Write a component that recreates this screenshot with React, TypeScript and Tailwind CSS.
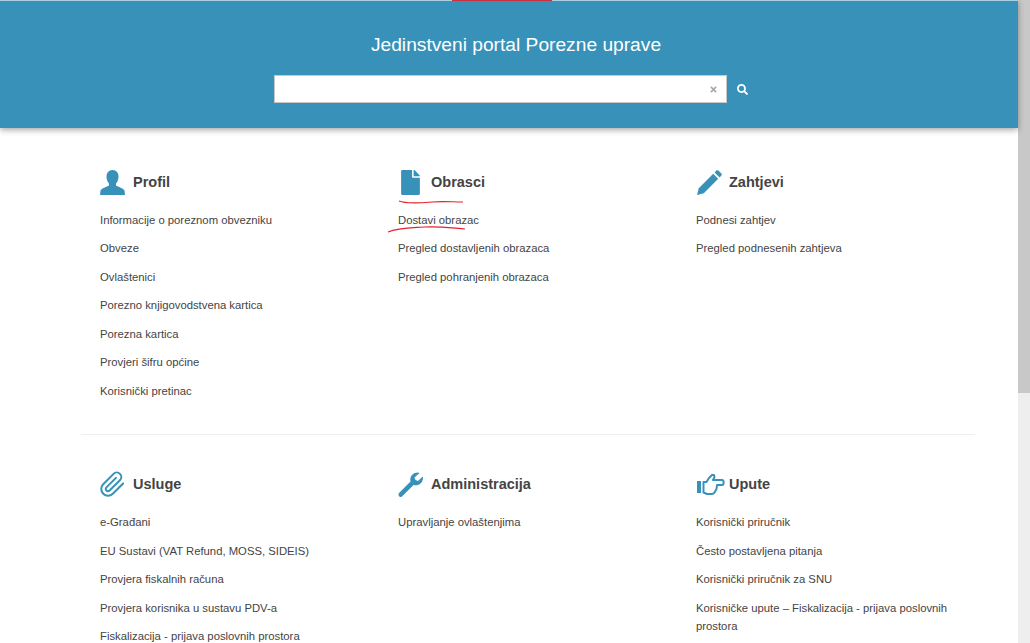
import { FaFile, FaSearch, FaTimes } from "react-icons/fa";
import { FiPaperclip } from "react-icons/fi";
import type { ReactNode } from "react";

type Section = {
  title: string;
  icon: ReactNode;
  links: string[];
};

function UserIcon() {
  return (
    <svg width="25" height="25" viewBox="0 0 25 25" fill="currentColor">
      <path d="M12.5 0C8.5 0 6.5 3 6.5 6.5C6.5 9.5 7.5 12 9 13.5V15.5C7 17 1.5 18 .5 20.5L0 25H25L24.5 20.5C23.5 18 18 17 16 15.5V13.5C17.5 12 18.5 9.5 18.5 6.5C18.5 3 16.5 0 12.5 0Z" />
    </svg>
  );
}

function PencilIcon() {
  return (
    <svg width="25" height="25" viewBox="0 0 25 25" fill="currentColor" className="translate-x-px">
      <path d="M0 25L1.8 18.2L16.2 3.8L21.2 8.8L6.8 23.2Z" />
      <path d="M17.6 2.4L19.4.6C20 0 20.8 0 21.4.6L24.4 3.6C25 4.2 25 5 24.4 5.6L22.6 7.4Z" />
    </svg>
  );
}

function WrenchIcon() {
  return (
    <svg width="25" height="25" viewBox="0 0 25 25" fill="currentColor">
      <path d="M1 21L12.5 9.5C11.5 5 14.5.5 20 .5L21.5 1L16.5 5.5L17.5 8L20 9L24.7 4.5L25 6C25 11 20 14.5 15.5 13L4 24.5C3 25.5 1.5 25 1 24C.3 23 .3 22 1 21Z" />
    </svg>
  );
}

function HandIcon() {
  return (
    <svg width="29" height="25" viewBox="0 0 29 25" fill="none" stroke="currentColor" strokeWidth="2" strokeLinejoin="round" className="-mr-1">
      <rect x="1" y="9" width="4" height="12" fill="currentColor" stroke="none" />
      <path d="M7.5 10H10.5L13 6L16 3H18L18.5 5L17 8H26C28.2 8 28.2 13 26 13H21L20.5 17L18.5 20.5C18 21.5 17 22 15.5 22H11L7.5 20.5Z" />
    </svg>
  );
}

const topSections: Section[] = [
  {
    title: "Profil",
    icon: <UserIcon />,
    links: [
      "Informacije o poreznom obvezniku",
      "Obveze",
      "Ovlaštenici",
      "Porezno knjigovodstvena kartica",
      "Porezna kartica",
      "Provjeri šifru općine",
      "Korisnički pretinac",
    ],
  },
  {
    title: "Obrasci",
    icon: <FaFile className="w-[25px] h-[25px]" />,
    links: ["Dostavi obrazac", "Pregled dostavljenih obrazaca", "Pregled pohranjenih obrazaca"],
  },
  {
    title: "Zahtjevi",
    icon: <PencilIcon />,
    links: ["Podnesi zahtjev", "Pregled podnesenih zahtjeva"],
  },
];

const bottomSections: Section[] = [
  {
    title: "Usluge",
    icon: <FiPaperclip className="w-[27px] h-[27px] -mx-px" strokeWidth={1.8} />,
    links: [
      "e-Građani",
      "EU Sustavi (VAT Refund, MOSS, SIDEIS)",
      "Provjera fiskalnih računa",
      "Provjera korisnika u sustavu PDV-a",
      "Fiskalizacija - prijava poslovnih prostora",
    ],
  },
  {
    title: "Administracija",
    icon: <WrenchIcon />,
    links: ["Upravljanje ovlaštenjima"],
  },
  {
    title: "Upute",
    icon: <HandIcon />,
    links: [
      "Korisnički priručnik",
      "Često postavljena pitanja",
      "Korisnički priručnik za SNU",
      "Korisničke upute – Fiskalizacija - prijava poslovnih prostora",
    ],
  },
];

function SectionColumn({ section }: { section: Section }) {
  return (
    <div className="w-[298px] pl-[19px] pr-4">
      <div className="flex items-center gap-2 h-[26px] text-[#3891b8]">
        {section.icon}
        <h2 className="pt-[2px] text-[14.5px] font-bold text-[#444444]">{section.title}</h2>
      </div>
      <ul className="mt-[15.9px] flex flex-col gap-[10.5px]">
        {section.links.map((link) => (
          <li key={link} className="text-[11.3px] leading-[18px] text-[#444444]">
            {link}
          </li>
        ))}
      </ul>
    </div>
  );
}

export default function App() {
  return (
    <div className="relative flex h-[643px] w-[1030px] overflow-hidden bg-white [font-family:'Liberation_Sans',Arial,sans-serif]">
      <div className="flex-1 min-w-0">
        <header className="relative h-[128px] border-t border-[#a9d0e0] bg-[#3891b8] shadow-[0_2px_6px_rgba(0,0,0,0.35)]">
          <div className="absolute left-[452px] top-[-1px] h-[1px] w-[100px] bg-[#c8313f]" />
          <h1 className="pt-[32px] pl-[14px] text-center text-[19.2px] leading-[24px] text-white">
            Jedinstveni portal Porezne uprave
          </h1>
          <div className="mt-[18px] ml-[274px] flex items-center">
            <div className="flex h-[28px] w-[453px] items-center justify-end border border-[#c8c8c8] bg-white pr-[8px]">
              <FaTimes className="w-[9px] h-[9px] text-[#aaaaaa]" />
            </div>
            <FaSearch className="ml-[10px] w-[11px] h-[11px] text-white" />
          </div>
        </header>

        <main className="ml-[81px] w-[894px] pt-[41px]">
          <div className="flex h-[265px]">
            {topSections.map((section) => (
              <SectionColumn key={section.title} section={section} />
            ))}
          </div>
          <div className="border-t border-[#eeeeee]" />
          <div className="flex pt-[36.2px]">
            {bottomSections.map((section) => (
              <SectionColumn key={section.title} section={section} />
            ))}
          </div>
        </main>
      </div>

      <div className="w-[12px] shrink-0 bg-[#eeeeee]">
        <div className="h-[393px] bg-[#c8c8c8]" />
      </div>

      {/* red pen marks over the Obrasci column */}
      <svg className="absolute left-[380px] top-[195px] pointer-events-none" width="100" height="45" viewBox="0 0 100 45" fill="none">
        <path d="M19 6 C 26 9, 40 8, 52 7 C 62 6, 72 7, 83 7" stroke="#e5202c" strokeWidth="1.2" />
        <path d="M8 37 C 18 33, 30 33, 44 32 C 58 31, 72 33, 85 34" stroke="#e5202c" strokeWidth="1.2" />
      </svg>
    </div>
  );
}
